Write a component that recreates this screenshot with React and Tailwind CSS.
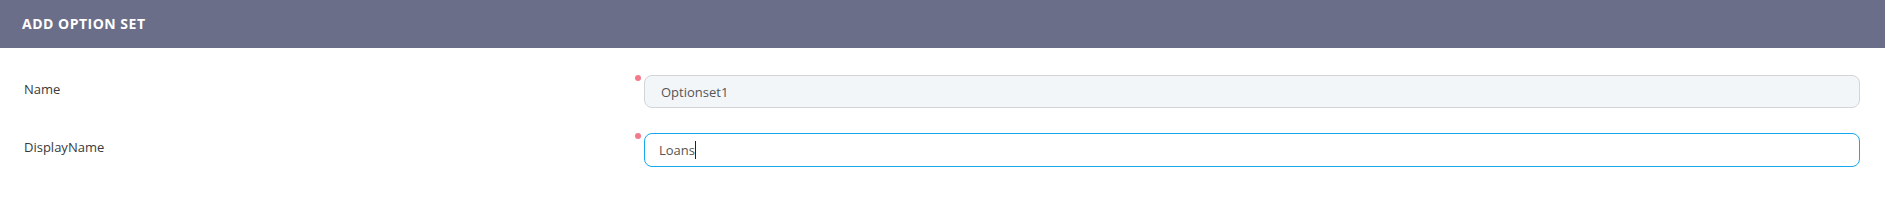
export default function App() {
  return (
    <div className="w-[1885px] h-[217px] bg-white" style={{ fontFamily: '"Open Sans", "Noto Sans", sans-serif' }}>
      <div className="h-[48px] bg-[#6b6e88] flex items-center px-[22px]">
        <h2 className="text-[14px] font-bold tracking-[0.5px] text-white leading-none">ADD OPTION SET</h2>
      </div>
      <div className="pl-[24px] pr-[25px] pt-[27px] flex flex-col gap-[25px]">
        <div className="flex items-start">
          <label className="w-[620px] pt-[5px] text-[13px] text-[#3a3a3a]">Name</label>
          <div className="relative flex-1">
            <span className="absolute left-[-9px] top-0 w-[6px] h-[6px] rounded-full bg-[#f37a8b]"></span>
            <input
              className="w-full h-[33px] rounded-[8px] border border-[#d3d4d6] bg-[#f3f6f9] px-[16px] text-[13px] text-[#555] outline-none"
              defaultValue="Optionset1"
              readOnly
            />
          </div>
        </div>
        <div className="flex items-start">
          <label className="w-[620px] pt-[5px] text-[13px] text-[#3a3a3a]">DisplayName</label>
          <div className="relative flex-1">
            <span className="absolute left-[-9px] top-0 w-[6px] h-[6px] rounded-full bg-[#f37a8b]"></span>
            <input
              className="w-full h-[34px] rounded-[8px] border-[1.5px] border-[#16a8ee] bg-white px-[14px] text-[13px] text-[#555] outline-none"
              defaultValue="Loans"
            />
            <span className="absolute left-[51px] top-[8px] w-px h-[18px] bg-[#222]"></span>
          </div>
        </div>
      </div>
    </div>
  );
}
